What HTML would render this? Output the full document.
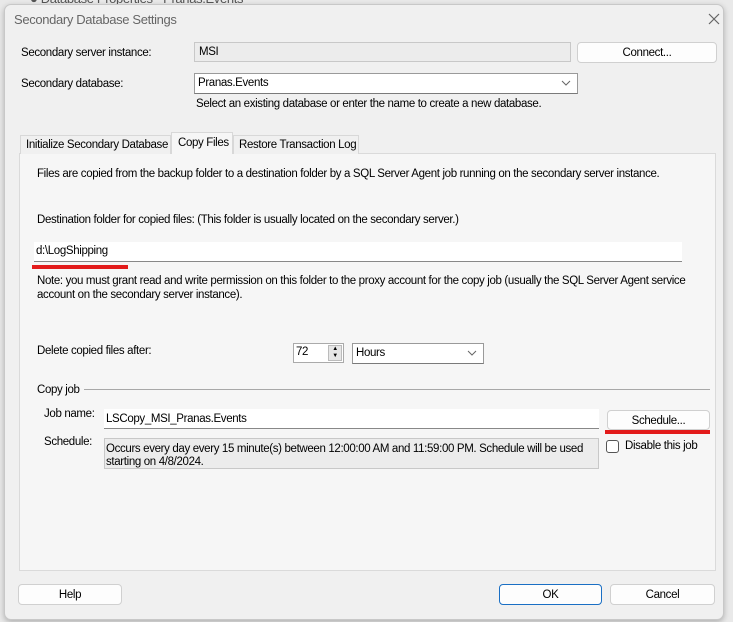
<!DOCTYPE html>
<html><head><style>
*{box-sizing:border-box;margin:0;padding:0}
body{width:733px;height:622px;overflow:hidden;background:#e9e9e9;font-family:"Liberation Sans",sans-serif;font-size:11.5px;letter-spacing:-0.35px;color:#000;position:relative}
.a{position:absolute;white-space:nowrap}
.dlg{position:absolute;left:4px;top:4px;width:720px;height:616px;background:#f0f0f0;border:1px solid #c8c8c8;border-radius:7px;box-shadow:0 2px 6px rgba(0,0,0,.25)}
.box{position:absolute;background:#fff;border:1px solid #9a9a9a;border-bottom-color:#7a7a7a;white-space:nowrap}
.btn{position:absolute;background:#fdfdfd;border:1px solid #d0d0d0;border-radius:4px;text-align:center;line-height:20px}
.red{position:absolute;background:#e31b1b;height:4px}
</style></head><body>
<div class="a" style="left:30px;top:-9px;color:#555;font-size:13px">● Database Properties - Pranas.Events</div>
<div class="dlg"></div>
<div class="a" style="left:14px;top:12px;font-size:13px;color:#666">Secondary Database Settings</div>
<svg style="position:absolute;left:708px;top:13px" width="12" height="12"><path d="M1 1L11 11M11 1L1 11" stroke="#666" stroke-width="1.2"/></svg>

<div class="a" style="left:21px;top:47px">Secondary server instance:</div>
<div class="box" style="left:194px;top:42px;width:377px;height:20px;background:#ececec;border-color:#c8c8c8;padding:3px 4px">MSI</div>
<div class="btn" style="left:577px;top:42px;width:140px;height:21px">Connect...</div>

<div class="a" style="left:21px;top:78px">Secondary database:</div>
<div class="box" style="left:194px;top:73px;width:384px;height:21px;padding:3px 3px">Pranas.Events<svg style="position:absolute;right:6px;top:6px" width="10" height="6"><path d="M1 1L5 5L9 1" stroke="#666" fill="none"/></svg></div>
<div class="a" style="left:196px;top:98px">Select an existing database or enter the name to create a new database.</div>

<div style="position:absolute;left:19px;top:153px;width:697px;height:418px;background:#f6f6f6;border:1px solid #dadada"></div>
<div class="a" style="left:20px;top:135px;width:151px;height:19px;border:1px solid #d8d8d8;border-bottom:none;background:#f0f0f0;padding:3px 5px">Initialize Secondary Database</div>
<div class="a" style="left:171px;top:132px;width:62px;height:22px;border:1px solid #d8d8d8;border-bottom:none;background:#f6f6f6;padding:4px 6px">Copy Files</div>
<div class="a" style="left:233px;top:135px;width:126px;height:19px;border:1px solid #d8d8d8;border-bottom:none;background:#f0f0f0;padding:3px 5px">Restore Transaction Log</div>

<div class="a" style="left:37px;top:168px">Files are copied from the backup folder to a destination folder by a SQL Server Agent job running on the secondary server instance.</div>
<div class="a" style="left:37px;top:214px">Destination folder for copied files: (This folder is usually located on the secondary server.)</div>
<div class="box" style="left:34px;top:242px;width:648px;height:20px;border:none;border-bottom:1px solid #888;padding:3px 2px">d:\LogShipping</div>
<div class="red" style="left:32px;top:265px;width:96px"></div>
<div class="a" style="left:37px;top:274px;line-height:14px">Note: you must grant read and write permission on this folder to the proxy account for the copy job (usually the SQL Server Agent service<br>account on the secondary server instance).</div>

<div class="a" style="left:37px;top:345px">Delete copied files after:</div>
<div class="box" style="left:293px;top:343px;width:51px;height:20px;border-color:#aaa;padding:2px 2px">72
<div style="position:absolute;right:1px;top:1px;width:14px;height:16px;background:#e6e6e6;border:1px solid #bbb;font-size:6px;line-height:7px;text-align:center">▲<br>▼</div></div>
<div class="box" style="left:352px;top:343px;width:132px;height:21px;padding:3px 3px">Hours<svg style="position:absolute;right:6px;top:6px" width="10" height="6"><path d="M1 1L5 5L9 1" stroke="#666" fill="none"/></svg></div>

<div class="a" style="left:37px;top:384px">Copy job</div>
<div style="position:absolute;left:84px;top:389px;width:626px;height:1px;background:#a8a8a8"></div>
<div class="a" style="left:44px;top:408px">Job name:</div>
<div class="box" style="left:104px;top:409px;width:495px;height:20px;border:none;border-bottom:1px solid #888;padding:4px 2px">LSCopy_MSI_Pranas.Events</div>
<div class="btn" style="left:607px;top:410px;width:103px;height:20px">Schedule...</div>
<div class="red" style="left:605px;top:430px;width:105px"></div>
<div class="a" style="left:44px;top:436px">Schedule:</div>
<div class="box" style="left:104px;top:438px;width:495px;height:31px;background:#ececec;border-color:#c8c8c8;padding:4px 1px;line-height:13px">Occurs every day every 15 minute(s) between 12:00:00 AM and 11:59:00 PM. Schedule will be used<br>starting on 4/8/2024.</div>
<div style="position:absolute;left:606px;top:440px;width:13px;height:13px;border:1px solid #555;border-radius:3px;background:#fff"></div>
<div class="a" style="left:625px;top:440px">Disable this job</div>

<div class="btn" style="left:18px;top:584px;width:104px;height:21px">Help</div>
<div class="btn" style="left:499px;top:584px;width:103px;height:21px;border:1px solid #1a6fc4">OK</div>
<div class="btn" style="left:610px;top:584px;width:105px;height:21px">Cancel</div>
</body></html>
